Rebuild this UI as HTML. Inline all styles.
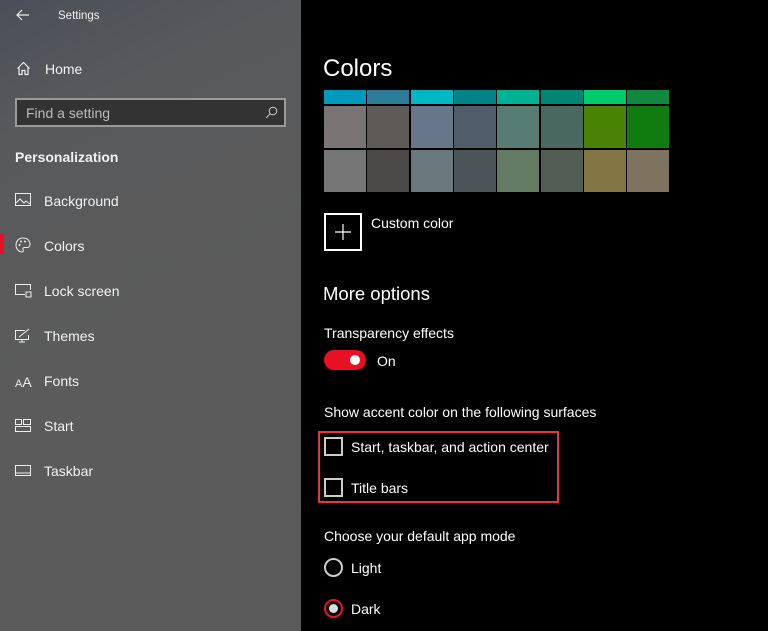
<!DOCTYPE html>
<html><head><meta charset="utf-8"><style>
*{margin:0;padding:0;box-sizing:border-box}
body{width:768px;height:631px;overflow:hidden;background:#000;font-family:"Liberation Sans",sans-serif;position:relative;color:#fff}
#side{position:absolute;left:0;top:0;width:301px;height:631px;background:linear-gradient(155deg,#4a4f58 0%,#58595b 18%,#5b5b5b 50%,#5a5a5a 100%)}
.t{position:absolute;white-space:nowrap}
.nav{font-size:14px;color:#f2f2f2}
.m{font-size:14px}
.ic{position:absolute}
.sw{position:absolute;width:42px}
</style></head><body>
<div id="side">
<svg class="ic" style="left:16px;top:9px" width="14" height="12" viewBox="0 0 14 12"><path d="M6 1L1 6L6 11M1 6H13" stroke="#eee" stroke-width="1.2" fill="none"/></svg>
<div class="t" style="left:58px;top:10px;font-size:11.5px;color:#eee">Settings</div>
<svg class="ic" style="left:16px;top:61px" width="15" height="15" viewBox="0 0 15 15"><path d="M1.5 7.5L7.5 1.5L13.5 7.5M3 6V13.5H6V9.5H9V13.5H12V6" stroke="#eee" stroke-width="1.2" fill="none"/></svg>
<div class="t nav" style="left:45px;top:61px">Home</div>
<div style="position:absolute;left:15px;top:98px;width:271px;height:29px;border:2px solid #9a9a9a;background:#333"></div>
<div class="t" style="left:26px;top:105px;font-size:14px;color:#bbb">Find a setting</div>
<svg class="ic" style="left:265px;top:106px" width="13" height="13" viewBox="0 0 13 13"><circle cx="8" cy="5" r="3.8" stroke="#ccc" fill="none"/><path d="M5.3 7.7L1 12" stroke="#ccc"/></svg>
<div class="t" style="left:15px;top:149px;font-size:14px;font-weight:bold;color:#f2f2f2">Personalization</div>
<svg class="ic" style="left:15px;top:193px" width="16" height="13" viewBox="0 0 16 13"><rect x="0.5" y="0.5" width="15" height="12" stroke="#eee" fill="none"/><path d="M1 10L5 6L9 10L11 8L15 11" stroke="#eee" fill="none"/></svg>
<div class="t nav" style="left:44px;top:193px">Background</div>
<div style="position:absolute;left:0;top:234px;width:4px;height:20px;background:#e81123"></div>
<svg class="ic" style="left:15px;top:237px" width="16" height="16" viewBox="0 0 16 16"><path d="M8 1C4 1 1 4 1 8s3 7 6 7c1.5 0 1.5-1.5 1-2.5s0-2 1.5-2H12c2 0 3-1.5 3-3C15 3.5 12 1 8 1z" stroke="#eee" fill="none"/><circle cx="4.5" cy="8" r="1" fill="#eee"/><circle cx="6" cy="4.5" r="1" fill="#eee"/><circle cx="10" cy="4.5" r="1" fill="#eee"/></svg>
<div class="t nav" style="left:44px;top:238px">Colors</div>
<svg class="ic" style="left:15px;top:284px" width="17" height="14" viewBox="0 0 17 14"><path d="M10 10.5H0.5V0.5H15.5V6" stroke="#eee" fill="none"/><rect x="11" y="8" width="5" height="5" stroke="#eee" fill="none"/></svg>
<div class="t nav" style="left:44px;top:283px">Lock screen</div>
<svg class="ic" style="left:15px;top:328px" width="16" height="15" viewBox="0 0 16 15"><path d="M10 2.5H0.5V11.5H13.5V7M4 14H10M7 11.5V14M4 9L14 1" stroke="#eee" fill="none"/></svg>
<div class="t nav" style="left:44px;top:328px">Themes</div>
<div class="t" style="left:15px;top:374px;font-size:11px;color:#eee">A<span style="font-size:14px">A</span></div>
<div class="t nav" style="left:44px;top:373px">Fonts</div>
<svg class="ic" style="left:15px;top:419px" width="16" height="14" viewBox="0 0 16 14"><rect x="0.5" y="0.5" width="6" height="5" stroke="#eee" fill="none"/><rect x="8.5" y="0.5" width="7" height="5" stroke="#eee" fill="none"/><rect x="0.5" y="7.5" width="15" height="5" stroke="#eee" fill="none"/></svg>
<div class="t nav" style="left:44px;top:418px">Start</div>
<svg class="ic" style="left:15px;top:465px" width="16" height="11" viewBox="0 0 16 11"><rect x="0.5" y="0.5" width="15" height="10" stroke="#eee" fill="none"/><path d="M1 8H15" stroke="#eee"/></svg>
<div class="t nav" style="left:44px;top:463px">Taskbar</div>
</div>

<div class="t" style="left:323px;top:55px;font-size:24px;color:#fff">Colors</div>
<div class="sw" style="left:324px;top:90px;height:14px;background:#0099bc"></div>
<div class="sw" style="left:367px;top:90px;height:14px;background:#2d7d9a"></div>
<div class="sw" style="left:411px;top:90px;height:14px;background:#00b7c3"></div>
<div class="sw" style="left:454px;top:90px;height:14px;background:#038387"></div>
<div class="sw" style="left:497px;top:90px;height:14px;background:#00b294"></div>
<div class="sw" style="left:541px;top:90px;height:14px;background:#018574"></div>
<div class="sw" style="left:584px;top:90px;height:14px;background:#00cc6a"></div>
<div class="sw" style="left:627px;top:90px;height:14px;background:#10893e"></div>
<div class="sw" style="left:324px;top:106px;height:42px;background:#7a7574"></div>
<div class="sw" style="left:367px;top:106px;height:42px;background:#5d5a58"></div>
<div class="sw" style="left:411px;top:106px;height:42px;background:#68768a"></div>
<div class="sw" style="left:454px;top:106px;height:42px;background:#515c6b"></div>
<div class="sw" style="left:497px;top:106px;height:42px;background:#567c73"></div>
<div class="sw" style="left:541px;top:106px;height:42px;background:#486860"></div>
<div class="sw" style="left:584px;top:106px;height:42px;background:#498205"></div>
<div class="sw" style="left:627px;top:106px;height:42px;background:#107c10"></div>
<div class="sw" style="left:324px;top:150px;height:42px;background:#767676"></div>
<div class="sw" style="left:367px;top:150px;height:42px;background:#4c4a48"></div>
<div class="sw" style="left:411px;top:150px;height:42px;background:#69797e"></div>
<div class="sw" style="left:454px;top:150px;height:42px;background:#4a5459"></div>
<div class="sw" style="left:497px;top:150px;height:42px;background:#647c64"></div>
<div class="sw" style="left:541px;top:150px;height:42px;background:#525e54"></div>
<div class="sw" style="left:584px;top:150px;height:42px;background:#847545"></div>
<div class="sw" style="left:627px;top:150px;height:42px;background:#7e735f"></div>

<div style="position:absolute;left:324px;top:213px;width:38px;height:38px;border:2px solid #fff"></div>
<svg class="ic" style="left:335px;top:224px" width="16" height="16" viewBox="0 0 16 16"><path d="M8 0V16M0 8H16" stroke="#fff" stroke-width="1.2"/></svg>
<div class="t m" style="left:371px;top:215px">Custom color</div>
<div class="t" style="left:323px;top:283px;font-size:18.5px">More options</div>
<div class="t m" style="left:324px;top:325px">Transparency effects</div>
<div style="position:absolute;left:324px;top:350px;width:42px;height:20px;border-radius:10px;background:#e81123"></div>
<div style="position:absolute;left:350px;top:355px;width:10px;height:10px;border-radius:5px;background:#fff"></div>
<div class="t m" style="left:377px;top:353px">On</div>
<div class="t m" style="left:324px;top:404px">Show accent color on the following surfaces</div>
<div style="position:absolute;left:318px;top:431px;width:241px;height:72px;border:2px solid #e8363f"></div>
<div style="position:absolute;left:324px;top:437px;width:19px;height:19px;border:2px solid #ccc"></div>
<div class="t m" style="left:351px;top:439px">Start, taskbar, and action center</div>
<div style="position:absolute;left:324px;top:478px;width:19px;height:19px;border:2px solid #ccc"></div>
<div class="t m" style="left:351px;top:480px">Title bars</div>
<div class="t m" style="left:324px;top:528px">Choose your default app mode</div>
<div style="position:absolute;left:324px;top:558px;width:19px;height:19px;border:2px solid #ccc;border-radius:50%"></div>
<div class="t m" style="left:351px;top:560px">Light</div>
<div style="position:absolute;left:324px;top:599px;width:19px;height:19px;border:2px solid #e81123;border-radius:50%"></div>
<div style="position:absolute;left:329px;top:604px;width:9px;height:9px;background:#ddd;border-radius:50%"></div>
<div class="t m" style="left:351px;top:601px">Dark</div>
</body></html>
